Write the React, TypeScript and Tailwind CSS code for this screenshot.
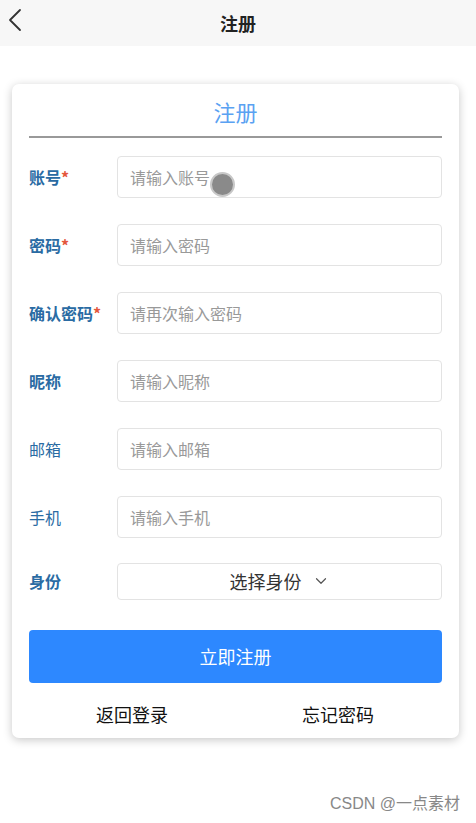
import { ChevronDown } from "lucide-react";

const fields = [
  { label: "账号", required: true, bold: true, placeholder: "请输入账号" },
  { label: "密码", required: true, bold: true, placeholder: "请输入密码" },
  { label: "确认密码", required: true, bold: true, placeholder: "请再次输入密码" },
  { label: "昵称", required: false, bold: true, placeholder: "请输入昵称" },
  { label: "邮箱", required: false, bold: false, placeholder: "请输入邮箱" },
  { label: "手机", required: false, bold: false, placeholder: "请输入手机" },
];

export default function App() {
  return (
    <div
      className="relative w-[476px] h-[823px] bg-white overflow-hidden"
      style={{ fontFamily: '"Noto Sans CJK SC", "Noto Sans", sans-serif' }}
    >
      {/* Header */}
      <div className="relative h-[46px] bg-[#f7f7f7] flex items-center justify-center">
        <svg className="absolute left-[6px] top-[8px]" width="18" height="24" viewBox="0 0 18 24">
          <polyline points="14,2 4,12 14,22" fill="none" stroke="#333" strokeWidth="1.8" strokeLinecap="round" strokeLinejoin="round" />
        </svg>
        <span className="text-[18px] font-bold text-[#222] leading-none">注册</span>
      </div>

      {/* Card */}
      <div className="mt-[38px] mx-[12px] w-[447px] bg-white rounded-[7px] shadow-[0_2px_10px_rgba(0,0,0,0.22)] px-[17px] pt-[10px] pb-[5px]">
        <div className="text-center text-[22px] leading-[34px] text-[#5aa2f2]">注册</div>
        <div className="mt-[8px] h-[1.5px] bg-[#999]" />

        <div className="mt-[18px] flex flex-col gap-[26px]">
          {fields.map((f) => (
            <div key={f.label} className="flex items-center">
              <div
                className={`w-[88px] text-[16px] text-[#2a6ba3] ${f.bold ? "font-bold" : "font-normal"}`}
              >
                {f.label}
                {f.required && <span className="text-[#e4573d]">*</span>}
              </div>
              <div className="flex-1 h-[42px] border border-[#e3e3e3] rounded-[4px] flex items-center px-[12px]">
                <span className="text-[16px] text-[#999]">{f.placeholder}</span>
              </div>
            </div>
          ))}
        </div>

        {/* Identity select */}
        <div className="mt-[25px] flex items-center">
          <div className="w-[88px] text-[16px] font-bold text-[#2a6ba3]">身份</div>
          <div className="flex-1 h-[37px] border border-[#e3e3e3] rounded-[4px] flex items-center justify-center gap-[10px]">
            <span className="text-[18px] text-[#333]">选择身份</span>
            <ChevronDown className="w-[18px] h-[18px] text-[#555]" strokeWidth={1.6} />
          </div>
        </div>

        <button className="mt-[30px] w-full h-[53px] rounded-[4px] bg-[#2d88ff] text-white text-[18px]">
          立即注册
        </button>

        <div className="mt-[14px] flex h-[36px] items-center">
          <span className="w-[206px] text-center text-[18px] text-[#111]">返回登录</span>
          <span className="w-[206px] text-center text-[18px] text-[#111]">忘记密码</span>
        </div>
      </div>

      {/* touch indicator */}
      <div className="absolute left-[210px] top-[172px] w-[25px] h-[25px] rounded-full bg-[#8a8a8a] border-[2px] border-[#c8c8c8]" />

      {/* watermark */}
      <div
        className="absolute right-[16px] top-[792px] text-[16px] text-[#888]"
        style={{ fontFamily: '"Liberation Sans", "Noto Sans CJK SC", sans-serif' }}
      >
        CSDN @一点素材
      </div>
    </div>
  );
}
